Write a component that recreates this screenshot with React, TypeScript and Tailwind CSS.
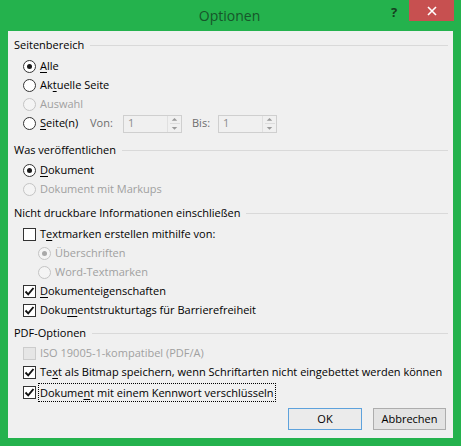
import React from "react";

const FONT = { fontFamily: '"Open Sans", "Noto Sans", Arial, sans-serif' };

function Heading({ text, className = "" }: { text: string; className?: string }) {
  return (
    <div className={`h-[19px] flex items-center ${className}`}>
      <span className="text-[#000] whitespace-nowrap">{text}</span>
      <div className="flex-1 ml-[6px] h-px bg-[#d9d9d9]" />
    </div>
  );
}

function Radio({ checked = false, disabled = false }: { checked?: boolean; disabled?: boolean }) {
  return (
    <span
      className={`w-[13px] h-[13px] rounded-full border flex items-center justify-center shrink-0 ${
        disabled ? "border-[#c4c4c4] bg-[#f4f4f4]" : "border-[#333] bg-white"
      }`}
    >
      {checked && (
        <span className={`w-[5px] h-[5px] rounded-full ${disabled ? "bg-[#a8a8a8]" : "bg-[#1a1a1a]"}`} />
      )}
    </span>
  );
}

function Check({ checked = false, disabled = false }: { checked?: boolean; disabled?: boolean }) {
  return (
    <span
      className={`w-[13px] h-[13px] border flex items-center justify-center shrink-0 ${
        disabled ? "border-[#cccccc] bg-[#e6e6e6]" : "border-[#333] bg-white"
      }`}
    >
      {checked && (
        <svg width="11" height="11" viewBox="0 0 11 11">
          <path d="M1.5 5.5 L4.2 8.3 L9.5 2" fill="none" stroke="#111" strokeWidth="1.9" />
        </svg>
      )}
    </span>
  );
}

function U({ children }: { children: React.ReactNode }) {
  return <span className="underline underline-offset-2">{children}</span>;
}

function Row({
  control,
  children,
  disabled = false,
  indent = false,
  className = "",
}: {
  control: React.ReactNode;
  children: React.ReactNode;
  disabled?: boolean;
  indent?: boolean;
  className?: string;
}) {
  return (
    <div className={`h-[19px] flex items-center ${indent ? "pl-[24px]" : "pl-[9px]"} ${className}`}>
      {control}
      <span className={`ml-[4px] whitespace-nowrap ${disabled ? "text-[#a0a0a0]" : "text-black"}`}>{children}</span>
    </div>
  );
}

function Spin() {
  return (
    <div className="w-[59px] h-[18px] border border-[#cfcfcf] bg-[#f0f0f0] flex items-stretch">
      <span className="flex-1 pl-[4px] text-[#8c8c8c] flex items-center">1</span>
      <div className="w-[14px] flex flex-col items-center justify-center border-l border-[#e0e0e0] py-[1px]">
        <svg width="7" height="5" viewBox="0 0 7 5" className="mb-[2px]">
          <path d="M0.5 4 L3.5 1 L6.5 4 Z" fill="#9a9a9a" />
        </svg>
        <div className="w-[10px] h-px bg-[#dcdcdc]" />
        <svg width="7" height="5" viewBox="0 0 7 5" className="mt-[2px]">
          <path d="M0.5 1 L3.5 4 L6.5 1 Z" fill="#9a9a9a" />
        </svg>
      </div>
    </div>
  );
}

export default function App() {
  return (
    <div className="w-[461px] h-[446px] bg-[#24b24d] flex flex-col text-[11px] overflow-hidden" style={FONT}>
      <div className="relative h-[31px] shrink-0 flex items-center justify-center">
        <span className="text-[14px] text-[#17552a] -mt-[1px] -ml-[2px]">Optionen</span>
        <span className="absolute left-[391px] top-[3px] text-[13px] font-bold text-[#15401f]">?</span>
        <div className="absolute left-[409px] top-0 w-[45px] h-[21px] bg-[#c75050] flex items-center justify-center">
          <svg width="10" height="10" viewBox="0 0 10 10">
            <path d="M1 1 L9 9 M9 1 L1 9" stroke="white" strokeWidth="1.6" />
          </svg>
        </div>
      </div>

      <div className="mx-[8px] h-[407px] bg-[#f0f0f0] flex flex-col pl-[6px] pr-[5px] pt-[5px]">
        <Heading text="Seitenbereich" />
        <Row className="mt-[2px]" control={<Radio checked />}>
          <U>A</U>lle
        </Row>
        <Row control={<Radio />}>
          Ak<U>t</U>uelle Seite
        </Row>
        <Row control={<Radio disabled />} disabled>
          Auswahl
        </Row>
        <div className="h-[19px] flex items-center pl-[9px]">
          <Radio />
          <span className="ml-[4px] w-[50px] whitespace-nowrap">
            <U>S</U>eite(n)
          </span>
          <span className="w-[33px] text-[#6d6d6d]">Von:</span>
          <Spin />
          <span className="ml-[10px] w-[26px] text-[#6d6d6d]">Bis:</span>
          <Spin />
        </div>

        <Heading text="Was veröffentlichen" className="mt-[8px]" />
        <Row className="mt-[1px]" control={<Radio checked />}>
          <U>D</U>okument
        </Row>
        <Row control={<Radio disabled />} disabled>
          Dokument mit Markups
        </Row>

        <Heading text="Nicht druckbare Informationen einschließen" className="mt-[5px]" />
        <Row className="mt-[2px]" control={<Check />}>
          T<U>e</U>xtmarken erstellen mithilfe von:
        </Row>
        <Row indent control={<Radio checked disabled />} disabled>
          Überschriften
        </Row>
        <Row indent control={<Radio disabled />} disabled>
          Word-Textmarken
        </Row>
        <Row control={<Check checked />}>
          <U>D</U>okumenteigenschaften
        </Row>
        <Row control={<Check checked />}>
          Doku<U>m</U>entstrukturtags für Barrierefreiheit
        </Row>

        <Heading text="PDF-Optionen" className="mt-[4px]" />
        <Row className="mt-[1px]" control={<Check disabled />} disabled>
          ISO 19005-1-kompatibel (PDF/A)
        </Row>
        <Row control={<Check checked />}>
          Te<U>x</U>t als Bitmap speichern, wenn Schriftarten nicht eingebettet werden können
        </Row>
        <div className="h-[19px] flex items-center pl-[9px] mt-[1px]">
          <Check checked />
          <span className="ml-[2px] px-[1px] border border-dotted border-black whitespace-nowrap leading-[17px]">
            Dokume<U>n</U>t mit einem Kennwort verschlüsseln
          </span>
        </div>

        <div className="mt-[6px] flex justify-end gap-[11px] pr-[2px]">
          <button className="w-[74px] h-[22px] border border-[#5ea2dc] bg-[#ebebeb] text-black text-[11px]" style={FONT}>
            OK
          </button>
          <button className="w-[73px] h-[22px] border border-[#adadad] bg-[#e3e3e3] text-black text-[11px]" style={FONT}>
            Abbrechen
          </button>
        </div>
      </div>
    </div>
  );
}
